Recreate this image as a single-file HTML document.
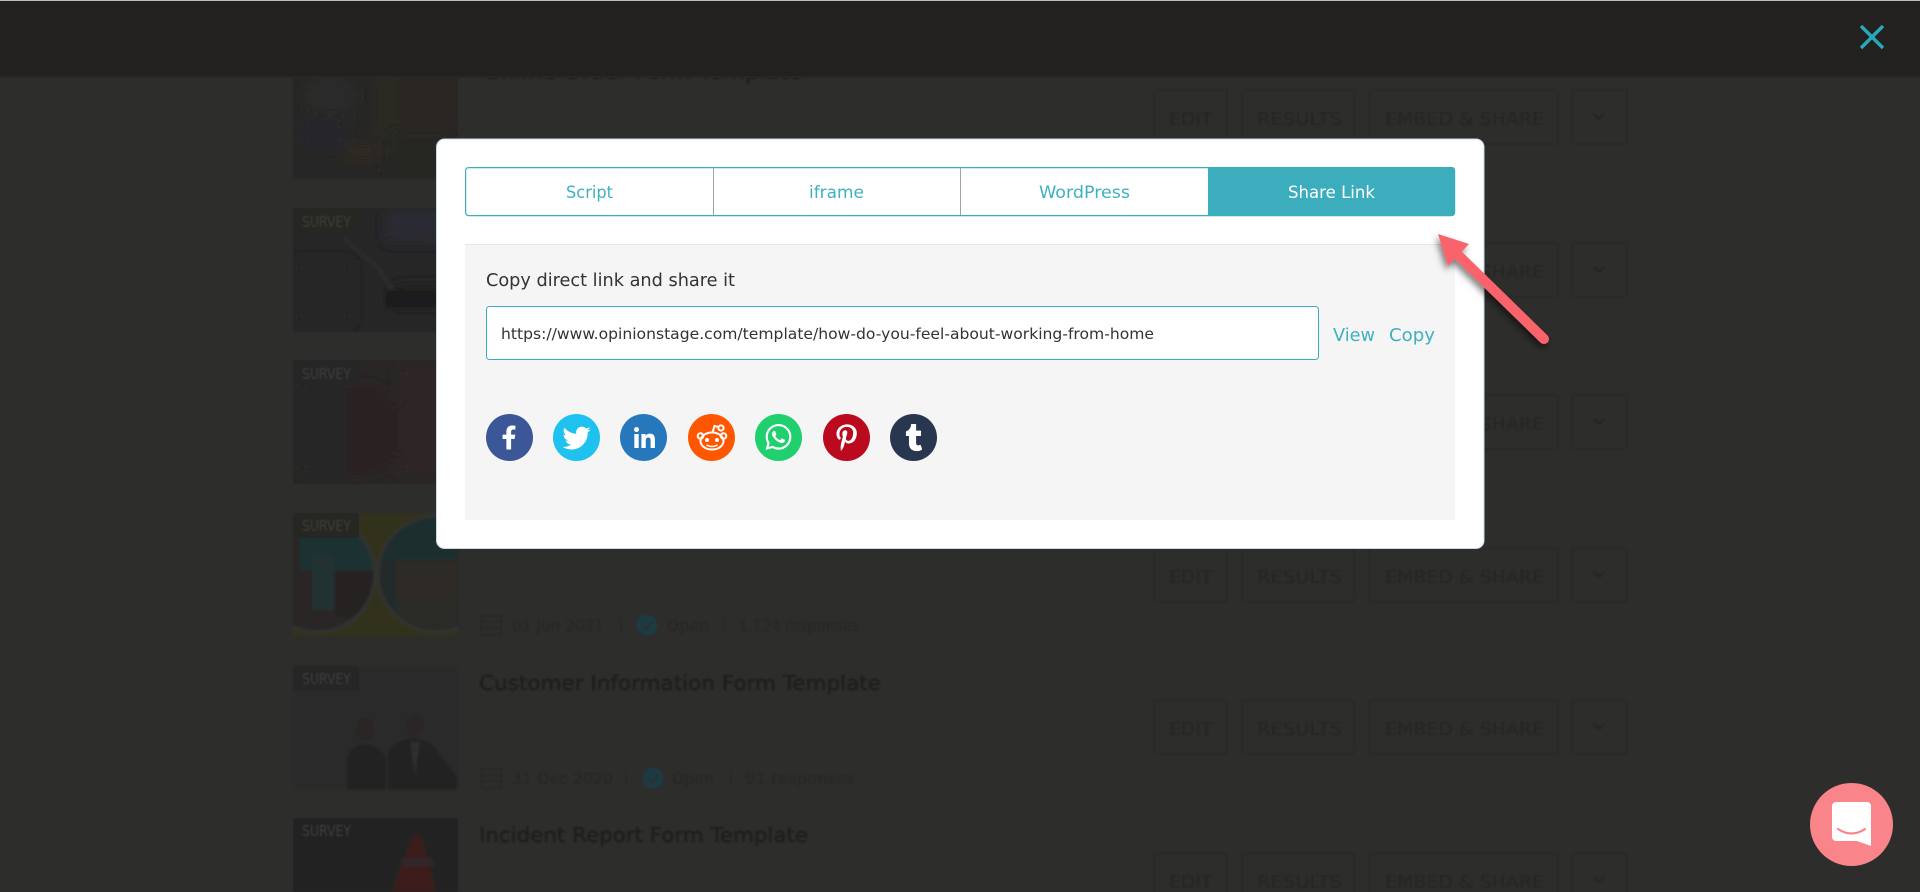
<!DOCTYPE html>
<html lang="en">
<head>
<meta charset="utf-8">
<title>Share Link</title>
<style>
html,body{margin:0;padding:0;width:1920px;height:892px;overflow:hidden;background:#2d2d2b}
svg{display:block;position:absolute;left:0;top:0}
text{font-family:"DejaVu Sans","Liberation Sans",sans-serif;white-space:pre}
.bt{fill:#242523;font-size:18px}
.bb{fill:none;stroke:#272826;stroke-width:1}
.ti{fill:#1f1f1e;font-size:20px;stroke:#1f1f1e;stroke-width:.35}
.me{fill:#252524;font-size:16px}
.sl{fill:#3a3a38;font-size:15px}
.tt{font-size:17px}
</style>
</head>
<body>
<svg width="1920" height="892" viewBox="0 0 1920 892" xmlns="http://www.w3.org/2000/svg">
<defs>
<filter id="soft" x="-5%" y="-5%" width="110%" height="110%"><feGaussianBlur stdDeviation="0.7"/></filter>
<filter id="blob" x="-30%" y="-30%" width="160%" height="160%"><feGaussianBlur stdDeviation="6"/></filter>
<filter id="bl2" x="-5%" y="-5%" width="110%" height="110%"><feGaussianBlur stdDeviation="1.4"/></filter>
<filter id="ashadow" x="-30%" y="-30%" width="170%" height="170%"><feDropShadow dx="-2" dy="4" stdDeviation="3.5" flood-color="#000" flood-opacity=".5"/></filter>
<clipPath id="c1"><rect x="293" y="55" width="165" height="124"/></clipPath>
<clipPath id="c2"><rect x="293" y="208" width="165" height="124"/></clipPath>
<clipPath id="c3"><rect x="293" y="360" width="165" height="124"/></clipPath>
<clipPath id="c4"><rect x="293" y="513" width="165" height="124"/></clipPath>
<clipPath id="c5"><rect x="293" y="666" width="165" height="124"/></clipPath>
<clipPath id="c6"><rect x="293" y="818" width="165" height="74"/></clipPath>
<clipPath id="cl"><circle cx="317" cy="574" r="56"/></clipPath>
<clipPath id="cr"><circle cx="436" cy="574" r="56"/></clipPath>
</defs>

<!-- dimmed page -->
<rect width="1920" height="892" fill="#2d2d2b"/>
<g filter="url(#soft)">
  <!-- thumb 1 -->
  <g clip-path="url(#c1)">
    <rect x="293" y="55" width="165" height="124" fill="#282725"/>
    <g filter="url(#blob)">
      <rect x="298" y="118" width="50" height="30" fill="#25282a"/>
      <rect x="376" y="70" width="14" height="70" fill="#2c2923"/>
      <rect x="392" y="70" width="60" height="60" fill="#2b2723"/>
      <rect x="345" y="146" width="34" height="12" fill="#312a21"/>
      <ellipse cx="330" cy="95" rx="26" ry="18" fill="#2c2c2a"/>
      <rect x="385" y="142" width="70" height="30" fill="#272624"/>
    </g>
  </g>
  <!-- thumb 2 -->
  <g clip-path="url(#c2)">
    <rect x="293" y="208" width="165" height="124" fill="#262626"/>
    <g filter="url(#blob)">
      <rect x="385" y="208" width="70" height="35" fill="#292c30"/>
      <rect x="293" y="260" width="60" height="65" fill="#252625"/>
      <rect x="395" y="285" width="62" height="20" fill="#20201f"/>
    </g>
    <g filter="url(#bl2)">
      <path d="M345 240L400 222" fill="none" stroke="#2a2b2c" stroke-width="0"/>
      <path d="M343 238L378 268L400 300" fill="none" stroke="#2c2c2c" stroke-width="5"/>
      <path d="M408 225l30 20" fill="none" stroke="#2a2b2d" stroke-width="4"/>
      <path d="M385 290h55v18h-55z" fill="#1f1f1f"/>
    </g>
    <rect x="293" y="208" width="66" height="25" fill="#252524"/>
  </g>
  <!-- thumb 3 -->
  <g clip-path="url(#c3)">
    <rect x="293" y="360" width="165" height="124" fill="#292726"/>
    <g filter="url(#blob)">
      <ellipse cx="362" cy="430" rx="40" ry="46" fill="#2c2221"/>
      <rect x="398" y="365" width="50" height="110" fill="#2e2726"/>
      <rect x="296" y="380" width="50" height="95" fill="#272726"/>
    </g>
    <rect x="293" y="360" width="66" height="25" fill="#282625"/>
  </g>
  <!-- thumb 4 -->
  <g clip-path="url(#c4)" >
    <g filter="url(#bl2)">
    <rect x="293" y="513" width="165" height="124" fill="#33331f"/>
    <circle cx="317" cy="574" r="58" fill="#2f2f2d" stroke="#30302e" stroke-width="4"/>
    <g clip-path="url(#cl)">
      <rect x="260" y="515" width="120" height="120" fill="#292726"/>
      <rect x="300" y="530" width="75" height="40" fill="#1f3233"/>
      <rect x="312" y="555" width="22" height="55" fill="#223032"/>
      <rect x="335" y="572" width="40" height="45" fill="#272321"/>
    </g>
    <circle cx="436" cy="574" r="58" fill="#2f2f2d" stroke="#30302e" stroke-width="4"/>
    <g clip-path="url(#cr)">
      <rect x="378" y="515" width="120" height="120" fill="#24292a"/>
      <rect x="378" y="515" width="120" height="45" fill="#1e2f2e"/>
      <rect x="396" y="560" width="62" height="40" fill="#2e2a27"/>
      <rect x="396" y="600" width="62" height="30" fill="#292927"/>
    </g>
    </g>
    <rect x="293" y="513" width="66" height="25" fill="#252523"/>
  </g>
  <!-- thumb 5 -->
  <g clip-path="url(#c5)">
    <g filter="url(#bl2)">
    <rect x="293" y="666" width="165" height="124" fill="#2c2c2b"/>
    <g stroke="#292928" stroke-width="2">
      <path d="M295 695h160M295 708h160M295 721h65M295 734h60M295 747h55M295 760h55M295 773h55"/>
      <path d="M305 690v95M320 690v95M335 690v70M350 690v50M425 690v40M440 690v50"/>
    </g>
    <ellipse cx="365" cy="729" rx="9" ry="12" fill="#2a2725"/>
    <ellipse cx="415" cy="725" rx="9" ry="12" fill="#2a2725"/>
    <path d="M347 790v-32q3-12 18-14q16 2 21 14v32z" fill="#232322"/>
    <path d="M388 790v-38q6-12 27-14q16 2 23 14l20 26v12z" fill="#222221"/>
    <path d="M410 742l5 35l5-35z" fill="#2f2f2d"/>
    </g>
    <rect x="293" y="666" width="66" height="25" fill="#262625"/>
  </g>
  <!-- thumb 6 -->
  <g clip-path="url(#c6)">
    <rect x="293" y="818" width="165" height="74" fill="#232322"/>
    <g filter="url(#bl2)">
      <path d="M413 836q4-3 8 0l6 24l9 32h-44l12-32z" fill="#3c1f1b"/>
      <path d="M402 858h30l2 8h-33z" fill="#33282a"/>
    </g>
  </g>

  <!-- survey tags -->
  <text class="sl" x="302" y="227" textLength="49" lengthAdjust="spacingAndGlyphs">SURVEY</text>
  <text class="sl" x="302" y="379" textLength="49" lengthAdjust="spacingAndGlyphs">SURVEY</text>
  <text class="sl" x="302" y="531" textLength="49" lengthAdjust="spacingAndGlyphs">SURVEY</text>
  <text class="sl" x="302" y="684" textLength="49" lengthAdjust="spacingAndGlyphs">SURVEY</text>
  <text class="sl" x="302" y="836" textLength="49" lengthAdjust="spacingAndGlyphs">SURVEY</text>

  <!-- titles -->
  <text class="ti" x="483" y="79" textLength="319" lengthAdjust="spacingAndGlyphs">Online Order Form Template</text>
  <text class="ti" x="479" y="690" textLength="402" lengthAdjust="spacingAndGlyphs">Customer Information Form Template</text>
  <text class="ti" x="479" y="842" textLength="329" lengthAdjust="spacingAndGlyphs">Incident Report Form Template</text>

  <!-- meta -->
  <g fill="none" stroke="#262625" stroke-width="1.2">
    <rect x="481" y="616" width="20" height="19"/><path d="M481 622h20M481 628h20"/>
    <rect x="481" y="769" width="20" height="19"/><path d="M481 775h20M481 781h20"/>
  </g>
  <text class="me" x="512" y="631" textLength="92" lengthAdjust="spacingAndGlyphs">01 Jun 2021</text>
  <rect x="620" y="618" width="1.5" height="15" fill="#262625"/>
  <circle cx="647" cy="625" r="10.5" fill="#1a3a42"/>
  <path d="M642 625l4 4l6-7" fill="none" stroke="#2d2d2b" stroke-width="2"/>
  <text class="me" x="667" y="631" textLength="42" lengthAdjust="spacingAndGlyphs">Open</text>
  <rect x="723" y="618" width="1.5" height="15" fill="#262625"/>
  <text class="me" x="739" y="631" textLength="120" lengthAdjust="spacingAndGlyphs">1,124 responses</text>
  <text class="me" x="512" y="784" textLength="101" lengthAdjust="spacingAndGlyphs">31 Dec 2020</text>
  <rect x="625" y="771" width="1.5" height="15" fill="#262625"/>
  <circle cx="653" cy="778" r="10.5" fill="#1a3a42"/>
  <path d="M648 778l4 4l6-7" fill="none" stroke="#2d2d2b" stroke-width="2"/>
  <text class="me" x="672" y="784" textLength="42" lengthAdjust="spacingAndGlyphs">Open</text>
  <rect x="730" y="771" width="1.5" height="15" fill="#262625"/>
  <text class="me" x="745" y="784" textLength="110" lengthAdjust="spacingAndGlyphs">91 responses</text>

  <!-- button rows -->
  <g>
    <rect class="bb" x="1154" y="90" width="73" height="54" rx="3"/><rect class="bb" x="1242" y="90" width="112" height="54" rx="3"/><rect class="bb" x="1369" y="90" width="189" height="54" rx="3"/><rect class="bb" x="1572" y="90" width="55" height="54" rx="3"/>
    <text class="bt" x="1169" y="125" textLength="43" lengthAdjust="spacingAndGlyphs">EDIT</text><text class="bt" x="1257" y="125" textLength="85" lengthAdjust="spacingAndGlyphs">RESULTS</text><text class="bt" x="1385" y="125" textLength="159" lengthAdjust="spacingAndGlyphs">EMBED &amp; SHARE</text>
    <path d="M1594 114l5 5l5-5" fill="none" stroke="#242523" stroke-width="2"/>
  </g>
  <g>
    <rect class="bb" x="1154" y="243" width="73" height="54" rx="3"/><rect class="bb" x="1242" y="243" width="112" height="54" rx="3"/><rect class="bb" x="1369" y="243" width="189" height="54" rx="3"/><rect class="bb" x="1572" y="243" width="55" height="54" rx="3"/>
    <text class="bt" x="1385" y="278" textLength="159" lengthAdjust="spacingAndGlyphs">EMBED &amp; SHARE</text>
    <path d="M1594 267l5 5l5-5" fill="none" stroke="#242523" stroke-width="2"/>
  </g>
  <g>
    <rect class="bb" x="1154" y="395" width="73" height="54" rx="3"/><rect class="bb" x="1242" y="395" width="112" height="54" rx="3"/><rect class="bb" x="1369" y="395" width="189" height="54" rx="3"/><rect class="bb" x="1572" y="395" width="55" height="54" rx="3"/>
    <text class="bt" x="1385" y="430" textLength="159" lengthAdjust="spacingAndGlyphs">EMBED &amp; SHARE</text>
    <path d="M1594 419l5 5l5-5" fill="none" stroke="#242523" stroke-width="2"/>
  </g>
  <g>
    <rect class="bb" x="1154" y="548" width="73" height="54" rx="3"/><rect class="bb" x="1242" y="548" width="112" height="54" rx="3"/><rect class="bb" x="1369" y="548" width="189" height="54" rx="3"/><rect class="bb" x="1572" y="548" width="55" height="54" rx="3"/>
    <text class="bt" x="1169" y="583" textLength="43" lengthAdjust="spacingAndGlyphs">EDIT</text><text class="bt" x="1257" y="583" textLength="85" lengthAdjust="spacingAndGlyphs">RESULTS</text><text class="bt" x="1385" y="583" textLength="159" lengthAdjust="spacingAndGlyphs">EMBED &amp; SHARE</text>
    <path d="M1594 572l5 5l5-5" fill="none" stroke="#242523" stroke-width="2"/>
  </g>
  <g>
    <rect class="bb" x="1154" y="700" width="73" height="54" rx="3"/><rect class="bb" x="1242" y="700" width="112" height="54" rx="3"/><rect class="bb" x="1369" y="700" width="189" height="54" rx="3"/><rect class="bb" x="1572" y="700" width="55" height="54" rx="3"/>
    <text class="bt" x="1169" y="735" textLength="43" lengthAdjust="spacingAndGlyphs">EDIT</text><text class="bt" x="1257" y="735" textLength="85" lengthAdjust="spacingAndGlyphs">RESULTS</text><text class="bt" x="1385" y="735" textLength="159" lengthAdjust="spacingAndGlyphs">EMBED &amp; SHARE</text>
    <path d="M1594 724l5 5l5-5" fill="none" stroke="#242523" stroke-width="2"/>
  </g>
  <g>
    <rect class="bb" x="1154" y="853" width="73" height="54" rx="3"/><rect class="bb" x="1242" y="853" width="112" height="54" rx="3"/><rect class="bb" x="1369" y="853" width="189" height="54" rx="3"/><rect class="bb" x="1572" y="853" width="55" height="54" rx="3"/>
    <text class="bt" x="1169" y="888" textLength="43" lengthAdjust="spacingAndGlyphs">EDIT</text><text class="bt" x="1257" y="888" textLength="85" lengthAdjust="spacingAndGlyphs">RESULTS</text><text class="bt" x="1385" y="888" textLength="159" lengthAdjust="spacingAndGlyphs">EMBED &amp; SHARE</text>
    <path d="M1594 877l5 5l5-5" fill="none" stroke="#242523" stroke-width="2"/>
  </g>
</g>

<!-- header bar -->
<rect width="1920" height="76" fill="#22211f"/>
<rect y="76" width="1920" height="2" fill="#272725"/>
<rect width="1920" height="1" fill="#bdbdbd"/>
<path d="M1861 26l22 22M1883 26l-22 22" fill="none" stroke="#2aa8ba" stroke-width="3.4"/>

<!-- modal -->
<rect x="436.5" y="139" width="1047.5" height="409.5" rx="8" fill="#fff" stroke="#c7dbe4" stroke-width="1"/>

<!-- tabs -->
<rect x="465.6" y="167.6" width="989" height="48" rx="3" fill="#fff" stroke="#3cadbd" stroke-width="1.2"/>
<rect x="713" y="168" width="1" height="47" fill="#9aa6a8"/>
<rect x="960" y="168" width="1" height="47" fill="#9aa6a8"/>
<path d="M1208 167h244a3 3 0 0 1 3 3v43a3 3 0 0 1-3 3h-244z" fill="#3cadbd"/>
<text class="tt" x="566" y="198" fill="#3eb0c2" textLength="47" lengthAdjust="spacingAndGlyphs">Script</text>
<text class="tt" x="809" y="198" fill="#3eb0c2" textLength="55" lengthAdjust="spacingAndGlyphs">iframe</text>
<text class="tt" x="1039" y="198" fill="#3eb0c2" textLength="91" lengthAdjust="spacingAndGlyphs">WordPress</text>
<text class="tt" x="1288" y="198" fill="#fff" textLength="87" lengthAdjust="spacingAndGlyphs">Share Link</text>

<!-- panel -->
<rect x="465" y="244" width="990" height="276" fill="#f5f5f5"/>
<rect x="465" y="244" width="990" height="1" fill="#e6e6e6"/>
<text x="486" y="286" font-size="18" fill="#333" textLength="249" lengthAdjust="spacingAndGlyphs">Copy direct link and share it</text>
<rect x="486.5" y="306.5" width="832" height="53" rx="3" fill="#fff" stroke="#3cadbd" stroke-width="1"/>
<text x="501" y="339" font-size="15.5" fill="#333" textLength="653" lengthAdjust="spacingAndGlyphs">https://www.opinionstage.com/template/how-do-you-feel-about-working-from-home</text>
<text x="1333" y="341" font-size="18" fill="#3eb0c2" textLength="42" lengthAdjust="spacingAndGlyphs">View</text>
<text x="1389" y="341" font-size="18" fill="#3eb0c2" textLength="46" lengthAdjust="spacingAndGlyphs">Copy</text>

<!-- social icons -->
<circle cx="509.5" cy="437.5" r="23.5" fill="#3b5797"/>
<path transform="translate(501.5,425.5) scale(.0469)" d="M279.14 288l14.22-92.66h-88.91v-60.13c0-25.35 12.42-50.06 52.24-50.06h40.42V6.26S260.43 0 225.36 0c-73.22 0-121.08 44.38-121.08 124.72v70.62H22.89V288h81.39v224h100.17V288z" fill="#fff"/>
<circle cx="576.5" cy="437.5" r="23.5" fill="#1fc1ee"/>
<path transform="translate(562.5,424) scale(1.17)" d="M23.954 4.569c-.885.389-1.83.654-2.825.775 1.014-.611 1.794-1.574 2.163-2.723-.951.555-2.005.959-3.127 1.184-.896-.959-2.173-1.559-3.591-1.559-2.717 0-4.92 2.203-4.92 4.917 0 .39.045.765.127 1.124C7.691 8.094 4.066 6.13 1.64 3.161c-.427.722-.666 1.561-.666 2.475 0 1.71.87 3.213 2.188 4.096-.807-.026-1.566-.248-2.228-.616v.061c0 2.385 1.693 4.374 3.946 4.827-.413.111-.849.171-1.296.171-.314 0-.615-.03-.916-.086.631 1.953 2.445 3.377 4.604 3.417-1.68 1.319-3.809 2.105-6.102 2.105-.39 0-.779-.023-1.17-.067 2.189 1.394 4.768 2.209 7.557 2.209 9.054 0 13.999-7.496 13.999-13.986 0-.209 0-.42-.015-.63.961-.689 1.8-1.56 2.46-2.548l-.047-.02z" fill="#fff"/>
<circle cx="643.5" cy="437.5" r="23.5" fill="#2677bb"/>
<path transform="translate(630,423) scale(1.22)" d="M20.447 20.452h-3.554v-5.569c0-1.328-.027-3.037-1.852-3.037-1.853 0-2.136 1.445-2.136 2.939v5.667H9.351V9h3.414v1.561h.046c.477-.9 1.637-1.85 3.37-1.85 3.601 0 4.267 2.37 4.267 5.455v6.286zM5.337 7.433c-1.144 0-2.063-.926-2.063-2.065 0-1.138.92-2.063 2.063-2.063 1.14 0 2.064.925 2.064 2.063 0 1.139-.925 2.065-2.064 2.065zm1.782 13.019H3.555V9h3.564v11.452z" fill="#fff"/>
<circle cx="711.5" cy="437.5" r="23.5" fill="#ff5700"/>
<g fill="none" stroke="#fff" stroke-width="2">
  <ellipse cx="712" cy="441" rx="11.5" ry="8.5"/>
  <circle cx="700.5" cy="436" r="2.8"/>
  <circle cx="723.5" cy="436" r="2.8"/>
  <circle cx="721" cy="428" r="2.6"/>
  <path d="M712.5 432.5l2-6.5l4 1"/>
</g>
<circle cx="707" cy="440" r="2" fill="#fff"/>
<circle cx="717" cy="440" r="2" fill="#fff"/>
<path d="M706.5 445q5.5 3 11 0" fill="none" stroke="#fff" stroke-width="1.5"/>
<circle cx="778.5" cy="437.5" r="23.5" fill="#20cf6d"/>
<path transform="translate(765.5,424) scale(1.08)" d="M17.472 14.382c-.297-.149-1.758-.867-2.03-.967-.273-.099-.471-.148-.67.15-.197.297-.767.966-.94 1.164-.173.199-.347.223-.644.075-.297-.15-1.255-.463-2.39-1.475-.883-.788-1.48-1.761-1.653-2.059-.173-.297-.018-.458.13-.606.134-.133.298-.347.446-.52.149-.174.198-.298.298-.497.099-.198.05-.371-.025-.52-.075-.149-.669-1.612-.916-2.207-.242-.579-.487-.5-.669-.51-.173-.008-.371-.01-.57-.01-.198 0-.52.074-.792.372-.272.297-1.04 1.016-1.04 2.479 0 1.462 1.065 2.875 1.213 3.074.149.198 2.096 3.2 5.077 4.487.709.306 1.262.489 1.694.625.712.227 1.36.195 1.871.118.571-.085 1.758-.719 2.006-1.413.248-.694.248-1.289.173-1.413-.074-.124-.272-.198-.57-.347m-5.421 7.403h-.004a9.87 9.87 0 01-5.031-1.378l-.361-.214-3.741.982.998-3.648-.235-.374a9.86 9.86 0 01-1.51-5.26c.001-5.45 4.436-9.884 9.888-9.884 2.64 0 5.122 1.03 6.988 2.898a9.825 9.825 0 012.893 6.994c-.003 5.45-4.437 9.884-9.885 9.884m8.413-18.297A11.815 11.815 0 0012.05 0C5.495 0 .16 5.335.157 11.892c0 2.096.547 4.142 1.588 5.945L.057 24l6.305-1.654a11.882 11.882 0 005.683 1.448h.005c6.554 0 11.89-5.335 11.893-11.893a11.821 11.821 0 00-3.48-8.413z" fill="#fff"/>
<circle cx="846.5" cy="437.5" r="23.5" fill="#bb0a1e"/>
<path transform="translate(836.5,424) scale(.053)" d="M204 6.5C101.4 6.5 0 74.9 0 185.6 0 256 39.6 296 63.6 296c9.9 0 15.6-27.6 15.6-35.4 0-9.3-23.7-29.1-23.7-67.8 0-80.4 61.2-137.4 140.4-137.4 68.1 0 118.5 38.7 118.5 109.8 0 53.1-21.3 152.7-90.3 152.7-24.9 0-46.2-18-46.2-43.8 0-37.8 26.4-74.4 26.4-113.4 0-66.2-93.9-54.2-93.9 25.8 0 16.8 2.1 35.4 9.6 50.7-13.8 59.4-42 147.9-42 209.1 0 18.9 2.7 37.5 4.5 56.4 3.4 3.8 1.7 3.4 6.9 1.5 50.4-69 48.6-82.5 71.4-172.8 12.3 23.4 44.1 36 69.3 36 106.2 0 153.9-103.5 153.9-196.8C384 71.3 298.2 6.5 204 6.5z" fill="#fff"/>
<circle cx="913.5" cy="437.5" r="23.5" fill="#29364f"/>
<path transform="translate(905.5,424) scale(.053)" d="M309.8 480.3c-13.6 14.5-50 31.7-97.4 31.7-120.8 0-147-88.8-147-140.6v-144H17.9c-5.5 0-10-4.5-10-10v-68c0-7.2 4.5-13.6 11.3-16 62-21.8 81.5-76 84.3-117.1.8-11 6.5-16.3 16.1-16.3h70.9c5.5 0 10 4.5 10 10v115.2h83c5.5 0 10 4.4 10 9.9v81.7c0 5.5-4.5 10-10 10h-83.4V360c0 34.2 23.7 53.6 68 35.8 4.8-1.9 9-3.2 12.7-2.2 3.5.9 5.8 3.4 7.4 7.9l22 64.3c1.8 5 3.3 10.6-.4 14.5z" fill="#fff"/>

<!-- arrow -->
<g filter="url(#ashadow)">
  <path d="M1455 252L1544 339" fill="none" stroke="#f9636c" stroke-width="10" stroke-linecap="round"/>
  <path d="M1438 234L1469 244L1448 266z" fill="#f9636c"/>
</g>

<!-- messenger launcher -->
<circle cx="1851.5" cy="824.5" r="41.5" fill="#f98489"/>
<path d="M1836 802h31a4 4 0 0 1 4 4v40l-14-5h-21a4 4 0 0 1-4-4v-31a4 4 0 0 1 4-4z" fill="#fff"/>
<path d="M1838 829q13.5 9 27 0" fill="none" stroke="#f98489" stroke-width="2.2" stroke-linecap="round"/>
</svg>
</body>
</html>
